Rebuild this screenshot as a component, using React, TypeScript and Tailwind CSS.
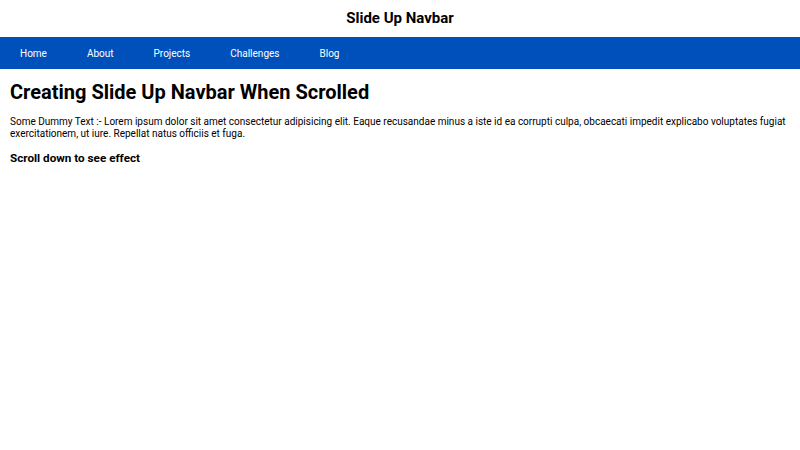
export default function App() {
  return (
    <div className="w-[800px] h-[450px] bg-white text-black overflow-hidden" style={{ fontFamily: 'Roboto, "Liberation Sans", sans-serif' }}>
      <header className="h-[37px] flex items-center justify-center">
        <h2 className="text-[15px] font-bold leading-none">Slide Up Navbar</h2>
      </header>
      <nav className="h-[32px] bg-[#0050bb] flex items-center">
        {['Home', 'About', 'Projects', 'Challenges', 'Blog'].map((t) => (
          <a key={t} className="px-5 text-[10px] text-white leading-none mt-[2px]">{t}</a>
        ))}
      </nav>
      <main className="px-[10px]">
        <h1 className="text-[20px] font-bold leading-none mt-[13px]">Creating Slide Up Navbar When Scrolled</h1>
        <p className="text-[10px] leading-[12px] mt-[14px]">
          Some Dummy Text :- Lorem ipsum dolor sit amet consectetur adipisicing elit. Eaque recusandae minus a iste id ea corrupti culpa, obcaecati impedit explicabo voluptates fugiat exercitationem, ut iure. Repellat natus officiis et fuga.
        </p>
        <h3 className="text-[11.7px] font-bold leading-none mt-[13px]">Scroll down to see effect</h3>
      </main>
    </div>
  );
}
